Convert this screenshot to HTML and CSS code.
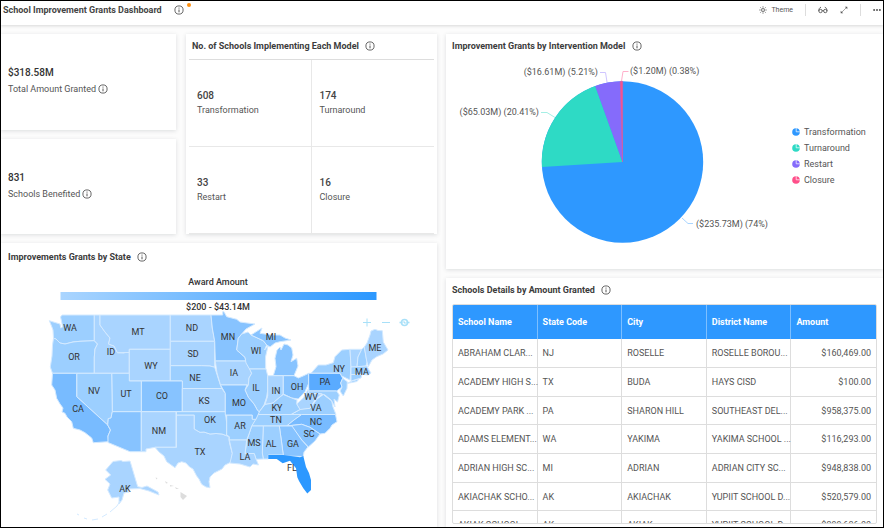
FILE: index.html
```html
<!DOCTYPE html>
<html lang="en">
<head>
<meta charset="utf-8">
<title>School Improvement Grants Dashboard</title>
<meta name="viewport" content="width=device-width, initial-scale=1">
<link rel="stylesheet" href="styles.css">
</head>
<body>
<svg width="0" height="0" class="defs" aria-hidden="true">
  <symbol id="info" viewBox="0 0 10 10"><circle cx="5" cy="5" r="4.1" fill="none" stroke="currentColor" stroke-width=".9"/><path d="M5 4.5v2.8M5 2.6v1" stroke="currentColor" stroke-width="1"/></symbol>
  <symbol id="slice" viewBox="0 0 8 8"><circle cx="4" cy="4" r="3.8" fill="currentColor"/><path d="M4.2 .2V3.8H7.8" fill="none" stroke="#fff" stroke-width=".7"/></symbol>
</svg>
<div class="app">
  <header class="topbar">
    <h1>School Improvement Grants Dashboard</h1>
    <svg class="info"><use href="#info"/></svg><span class="dot"></span>
    <nav class="tools">
      <button class="theme"><svg width="8" height="8" viewBox="0 0 8 8"><circle cx="4" cy="4" r="1.5" fill="none" stroke="currentColor" stroke-width=".8"/><path d="M4 .3v1.3M4 6.4v1.3M.3 4h1.3M6.4 4h1.3M1.4 1.4l.9.9M5.7 5.7l.9.9M1.4 6.6l.9-.9M5.7 2.3l.9-.9" stroke="currentColor" stroke-width=".8"/></svg>Theme</button>
      <span class="rule"></span>
      <button aria-label="View"><svg width="10" height="8" viewBox="0 0 10 8"><g fill="none" stroke="currentColor" stroke-width=".9"><circle cx="2.5" cy="5" r="1.7"/><circle cx="7.3" cy="5" r="1.7"/><path d="M.8 5C.8 3 1.5 1.6 3 1.2M9 5C9 3 8.3 1.6 6.8 1.2M4.2 4.6h1.4"/></g></svg></button>
      <button aria-label="Full screen"><svg width="8" height="8" viewBox="0 0 8 8"><path d="M4.4 3.6 6.6 1.4M3.6 4.4 1.4 6.6" stroke="currentColor" stroke-width=".9" stroke-dasharray="1.6 .5"/><path d="M4.8.8h2.500v2.500zM3.200 7.300H.7V4.800z" fill="currentColor"/></svg></button>
      <span class="rule"></span>
      <button aria-label="More"><svg width="8" height="4" viewBox="0 0 8 4"><g fill="currentColor"><circle cx="1.1" cy="2" r="1"/><circle cx="4" cy="2" r="1"/><circle cx="6.9" cy="2" r="1"/></g></svg></button>
    </nav>
  </header>
  <main class="board">
    <div class="left">
      <div class="summary">
        <div class="kpis">
          <section class="card kpi"><strong>$318.58M</strong><span>Total Amount Granted <svg class="info"><use href="#info"/></svg></span></section>
          <section class="card kpi"><strong>831</strong><span>Schools Benefited <svg class="info"><use href="#info"/></svg></span></section>
        </div>
        <section class="card models">
          <h2>No. of Schools Implementing Each Model <svg class="info"><use href="#info"/></svg></h2>
          <div class="grid">
            <div><strong>608</strong><span>Transformation</span></div>
            <div><strong>174</strong><span>Turnaround</span></div>
            <div><strong>33</strong><span>Restart</span></div>
            <div><strong>16</strong><span>Closure</span></div>
          </div>
        </section>
      </div>
      <section class="card mapcard">
        <h2>Improvements Grants by State <svg class="info"><use href="#info"/></svg></h2>
        <svg class="map" viewBox="1 271 436 253" role="img" aria-label="Grants by state">
          <defs><linearGradient id="scale"><stop stop-color="#aad5ff"/><stop offset="1" stop-color="#2c98ff"/></linearGradient></defs>
          <text class="cap" x="218" y="285">Award Amount</text>
          <rect x="60.500" y="292" width="316" height="8" fill="url(#scale)"/>
          <text class="cap" x="218" y="310">$200 - $43.14M</text>
          <g class="states">
            <path class="b" d="M49.3 320.700L55 322.500 60 324 60.700 328 62.700 327 61.500 321 60.500 317 62 315H94.300V340.700L88 341 80 341.300 73 342 65 344 60 343 56 339 53.500 338.300 53 330 51.500 326z"/>
            <path class="b" d="M53.500 338.300L56 339 60 343 65 344 73 342 80 341.300 94.300 340.700 97.500 344 95 349 94.300 357V373.300H52.500L50.300 367 52 356 52.500 345z"/>
            <path class="a" d="M94.300 315H100V325L105 332 110 338 108.500 344 114 346 117.500 352.700 124 353 129.300 350V373.300H94.300V357L95 349 97.500 344 94.300 340.700z"/>
            <path class="a" d="M100 315H170.300V349.300H129.300V352.500L117.500 352.700 114 346 108.500 344 110 338 105 332 100 325z"/>
            <path class="a" d="M129.300 349.300H170.300V381H129.300z"/>
            <path class="a" d="M170.300 315H211L212.300 328 214.700 341.300H170.300z"/>
            <path class="a" d="M170.300 341.300H214.700V367.300L210 366 201.700 365.700H170.300z"/>
            <path class="b" d="M170.300 365.700H201.700L210 366 214.700 367.300 219.300 381.700 221.700 388.500H182.300V381H170.300z"/>
            <path class="c" d="M141.300 381H182.300V411.700H141.300z"/>
            <path class="a" d="M182.300 388.500H221.700L225.300 393.300V411.700H182.300z"/>
            <path class="b" d="M111.700 373.300H129.300V381H141.300V411.700H112.300z"/>
            <path class="b" d="M76.700 373.300H111.700L112.300 411.700 111 418.500H108.300L107.700 425 76.700 396.700z"/>
            <path class="d" d="M52.500 373.300H76.700V396.700L107.700 425 110.500 430 108 436 108.500 441.700 93.300 442.700 91.700 438 85 432.700 80 430 73.300 428.300 71.700 421.700 67 417 65 413.300 62 412 63 408 60 404 56.700 398.300 55 390 51.700 385z"/>
            <path class="c" d="M112.300 411.700H141.300V451.700H130L108 442.500 108 436 110.500 430 107.700 425 108.300 418.500 111 418z"/>
            <path class="a" d="M141.300 411.700H176V447.300H155L146 449V451.700H141.300z"/>
            <path class="a" d="M176.500 415H194.300V429L200 432.300 204 432 210 434 216 433.500 222 434 229 436.700V440L230 445 232.300 453.300 231.300 462 225 465 222 469 214 473 210 477 209 481.700 210 487.700 206 487 201.700 484.300 199 479 196.700 476 193 469 189.300 466.700 186 463 181.700 461.700 178 463 175 467.700 166.700 461.700 164 456 159 452 155 447.300H176.500z"/>
            <path class="b" d="M176.500 411.700H225.300L226.700 423.300V435.700L222 434 216 433.500 210 434 204 432 200 432.300 194.300 429V415H176.500z"/>
            <path class="c" d="M211 315H222.700V311.700H224L226.700 316.700 236.700 319.300 240 322 245 322.700 255 324 246 329 241.700 334 238.300 338.300 236.700 350 245 357.300 246 361H215.300L214.700 341.300 212.300 328z"/>
            <path class="a" d="M215.300 361H246L248.300 365 251.700 373.300 249 378 248.300 385H220.500L217 373z"/>
            <path class="b" d="M241.700 334L248 332 251 335 263.300 340.700 266.700 345 264.500 350 268 346 265.500 357 265.700 369H249.500L246 363 245 357.300 236.700 350 238.300 338.300z"/>
            <path class="c" d="M251 335L262 328 260 333.300 271.700 335 280 335 285 338 291 340 280 341.700 275 343 270 347 266.700 345 263.300 340.700z"/>
            <path class="c" d="M273.300 375.700L276 366.700 275 358.300 277 350 280 347 281 350 284 344 288 345 291.700 348 293 355 291 361.700 296.700 358.300 298 366 294 375.700z"/>
            <path class="b" d="M249.500 369H266L267.700 375.700V390L266.700 397 264 405 259.300 412 257.300 410 254 404 248.300 397.300 245 390 248.300 385 249 378 251.700 373.300z"/>
            <path class="a" d="M267.700 375.700H283.300V394L280 397 273 403 265 404.500 267.700 396z"/>
            <path class="c" d="M283.300 375.700H294L298.300 378 303 376 308.700 373.300V383.300L305 391.700 298.300 399 291.700 398 283.300 394z"/>
            <path class="b" d="M311 373.300L318.300 365 326 365 333.300 362.700 335 356.700 341.700 350 350 349.300 351 366.700 350 380 341.700 376 340 373.300z"/>
            <path class="e" d="M308.700 373.300H340L342.700 378.300 340.700 383 342 387 336.700 391H308.700z"/>
            <path class="b" d="M346.700 383.500L352 381 359 379 357 381.500z"/>
            <path class="a" d="M350 349.300H361.700L358 357 357 367H351z"/>
            <path class="b" d="M361.700 349.300L364.300 347 367 362 366 366 357 367 358 357z"/>
            <path class="b" d="M351 367L367 366 369 370 371 373 368 375 364 374.500H351z"/>
            <path class="b" d="M351 374.500H362L361 378 351 381z"/>
            <path class="a" d="M364.300 347L367 343 370 335 371 331 375 329.300 378 330.500 382.300 330.700 383.300 342 388 350 383 354 376.700 356.700 372 360 368.300 366.700 366.500 360z"/>
            <path class="b" d="M342.700 378.300L347.300 381.700 347 388.300 343.300 396 340 391 342 387 340.700 383z"/>
            <path class="b" d="M308.700 391H336.700L339.300 395 337.500 402 334 399 335 407 331 400 325 395 320 393.500 315 394 309 397z"/>
            <path class="a" d="M308.700 388V393.500L316 393.500 322 394 315 400 310 408.300 300 410 296.700 404 303.300 398z"/>
            <path class="b" d="M291 414.500L300 409.500 310 408.300 317 399 323.300 394.500 331.700 401 333 407 336 414.500z"/>
            <path class="b" d="M257 414.500L265 404.500 273 403 280 397 283.300 394.500 291.700 398 297 400 296.700 404 300 409.500 291 414.500z"/>
            <path class="b" d="M256.700 414.500H301.700L294 420 286.700 426H251.700z"/>
            <path class="d" d="M301.700 414.500H335.500L337 421.700 332 425 330 428.300 325 433.300 320 434 310 427.300 301.700 424.300 286.700 426 294 420z"/>
            <path class="c" d="M286.700 426L301.700 424.300 310 427.300 320 434 315 441 308.300 447 301.700 440 292.700 428z"/>
            <path class="c" d="M279.300 426H292L301.700 440 308 447 304 452 303.300 456.500 283.300 456 281.700 443z"/>
            <path class="b" d="M263.300 426H279.300L281.700 443 283.300 455H268.300V459H263.300L262.300 453z"/>
            <path class="b" d="M251.700 426H263.300L262.300 453 263.300 459 256 459.300 254.300 454H245L247 440z"/>
            <path class="b" d="M226.700 415H252.300V419H256L251.700 426 249 434 246.700 440H229.300V436.700L226.700 435z"/>
            <path class="c" d="M220.500 385H247L245 390 248.300 397.300 254 404 257.300 410 259.300 412 256 419.300H252.300V415H225.300V393.300z"/>
            <path class="a" d="M229.300 440H246.700L245 453.500H254.300L256 459 258.500 465 253 464 250 467 240 464 230 463 232.300 453.300z"/>
            <path class="f" d="M268.300 455H283.300L300 457.300 303.300 456 306 467 309 473 311 480V490L307.300 493.500 303.300 488.300 299 481 297.300 477.300 296 468.300 290 460.700 282.700 463.300 276.700 459H268.300z"/>
            <path class="a" d="M105.700 470L113 461.500 121 460.500 123 461.500 130 461 137.700 486.700 142 487.500 147 486 158 492 159 495 149 491 140 488.500 128 489 129 492 124 493 122 500 119 504 119 497 111.700 498 107.700 490 110 484 105 479.300 110.700 475z"/>
            <path class="tail" d="M120 501L117 506 110 512M107 514L102 517M98 519L92 520M87 519L84 518M79 515L77 514"/>
            <path class="n" d="M180.500 492L187 496 183 500 180.500 497zM175 487L179 489 176 489zM155.500 477.500L157.500 478 156.500 479.500zM165 481L168 483 166 483.500zM170 485L174 486 170 486.500z"/>
          </g>
          <g class="lab">
            <text x="70" y="331">WA</text><text x="138" y="335">MT</text><text x="192" y="331">ND</text><text x="228" y="340">MN</text><text x="271" y="340">MI</text>
            <text x="74" y="360">OR</text><text x="111" y="355">ID</text><text x="193" y="357">SD</text><text x="256" y="354">WI</text><text x="375" y="351">ME</text>
            <text x="151" y="369">WY</text><text x="195" y="381">NE</text><text x="234" y="376">IA</text><text x="339" y="372">NY</text><text x="362" y="375">MA</text>
            <text x="94" y="394">NV</text><text x="126" y="397">UT</text><text x="162" y="399">CO</text><text x="204" y="404">KS</text><text x="239" y="406">MO</text><text x="256" y="391">IL</text><text x="276" y="394">IN</text><text x="297" y="390">OH</text><text x="325" y="385">PA</text>
            <text x="78" y="412">CA</text><text x="311" y="400">WV</text><text x="316" y="411">VA</text><text x="277" y="411">KY</text><text x="276" y="423">TN</text><text x="316" y="425">NC</text>
            <text x="159" y="434">NM</text><text x="210" y="423">OK</text><text x="240" y="429">AR</text><text x="309" y="437">SC</text><text x="254" y="446">MS</text><text x="271" y="447">AL</text><text x="293" y="447">GA</text>
            <text x="200" y="455">TX</text><text x="245" y="460">LA</text><text x="292" y="471">FL</text><text x="125" y="492">AK</text>
          </g>
          <g class="zoomer"><path d="M363 322.500H371M367 318.500V326.500M382 322.500H390"/><circle cx="404.500" cy="322.500" r="3" stroke-width="1.600"/><path d="M399.500 322.500H402.500M406.500 322.500H409.500M403.500 321.500L405.500 323.500" stroke-width="1.400"/></g>
        </svg>
      </section>
    </div>
    <div class="right">
      <section class="card piecard">
        <h2>Improvement Grants by Intervention Model <svg class="info"><use href="#info"/></svg></h2>
        <div class="pie">
          <svg viewBox="452 56 324 200" role="img" aria-label="Grants by model">
            <circle cx="622.500" cy="162" r="80.700" fill="#2e98ff"/>
            <path d="M622.500 162L541.900 167A80.700 80.700 0 0 1 595.200 86.100z" fill="#2edac5"/>
            <path d="M622.500 162L595.200 86.100A80.700 80.700 0 0 1 620.600 81.300z" fill="#856bfb"/>
            <path d="M622.500 162L620.300 81.300H622.700z" fill="#f9508c" stroke="#e15a9c" stroke-width=".5"/>
            <g class="leads"><path d="M600 72.500H605.500L607 82" stroke="#cfc5ff"/><path d="M628.500 71.500H623L621.500 81" stroke="#ffb0cb"/><path d="M541 112.500H547L555 117.500" stroke="#a5efe5"/><path d="M682 218L688 223.500H693" stroke="#a9d5ff"/></g>
            <text x="598" y="75" text-anchor="end">($16.61M) (5.21%)</text>
            <text x="630" y="74">($1.20M) (0.38%)</text>
            <text x="539" y="115" text-anchor="end">($65.03M) (20.41%)</text>
            <text x="696" y="227">($235.73M) (74%)</text>
          </svg>
          <ul>
            <li><svg class="s1"><use href="#slice"/></svg>Transformation</li>
            <li><svg class="s2"><use href="#slice"/></svg>Turnaround</li>
            <li><svg class="s3"><use href="#slice"/></svg>Restart</li>
            <li><svg class="s4"><use href="#slice"/></svg>Closure</li>
          </ul>
        </div>
      </section>
      <section class="card details">
        <h2>Schools Details by Amount Granted <svg class="info"><use href="#info"/></svg></h2>
        <div class="scroll">
          <table>
            <thead><tr><th>School Name</th><th>State Code</th><th>City</th><th>District Name</th><th>Amount</th></tr></thead>
            <tbody>
              <tr><td>ABRAHAM CLAR...</td><td>NJ</td><td>ROSELLE</td><td>ROSELLE BOROU...</td><td>$160,469.00</td></tr>
              <tr><td>ACADEMY HIGH S...</td><td>TX</td><td>BUDA</td><td>HAYS CISD</td><td>$100.00</td></tr>
              <tr><td>ACADEMY PARK ...</td><td>PA</td><td>SHARON HILL</td><td>SOUTHEAST DEL...</td><td>$958,375.00</td></tr>
              <tr><td>ADAMS ELEMENT...</td><td>WA</td><td>YAKIMA</td><td>YAKIMA SCHOOL ...</td><td>$116,293.00</td></tr>
              <tr><td>ADRIAN HIGH SC...</td><td>MI</td><td>ADRIAN</td><td>ADRIAN CITY SC...</td><td>$948,838.00</td></tr>
              <tr><td>AKIACHAK SCHO...</td><td>AK</td><td>AKIACHAK</td><td>YUPIIT SCHOOL D...</td><td>$520,579.00</td></tr>
              <tr><td>AKIAK SCHOOL</td><td>AK</td><td>AKIAK</td><td>YUPIIT SCHOOL D...</td><td>$399,686.00</td></tr>
            </tbody>
          </table>
        </div>
      </section>
    </div>
  </main>
</div>
</body>
</html>
```
FILE: styles.css
```css
* { box-sizing: border-box; }
body { margin: 0; font: 9px/12px Roboto, sans-serif; color: #555; }
h1, h2, ul { margin: 0; padding: 0; }
.defs { position: absolute; }
.app { display: flex; flex-direction: column; height: 100vh; border: 1px solid #000; background: #fcfcfc; overflow: hidden; }
.info { width: 10px; height: 10px; color: #555; flex: none; vertical-align: -2px; }
.topbar { flex: none; display: flex; align-items: center; height: 24px; padding: 0 2px 6px; background: #fff; box-shadow: 0 1px 3px rgba(0, 0, 0, .15); }
h1 { font-size: 9px; font-weight: 700; color: #444; margin-right: 12px; }
.dot { width: 4px; height: 4px; border-radius: 50%; background: #ff9010; align-self: flex-start; margin: 2px 0 0 3px; }
.tools { margin-left: auto; display: flex; align-items: center; gap: 12px; }
.tools button { display: flex; align-items: center; gap: 4px; border: 0; padding: 0; background: none; font: 7px/12px Roboto, sans-serif; color: #555; }
.rule { width: 1px; height: 12px; background: #ddd; }

.board { flex: 1; min-height: 0; display: grid; grid-template-columns: 436fr 437fr; gap: 9px; padding-top: 9px; }
.left, .right { min-width: 0; min-height: 0; display: flex; flex-direction: column; gap: 9px; }
.card { background: #fff; box-shadow: 0 1px 4px rgba(60, 70, 80, .17); }
h2 { font-size: 9px; line-height: 12px; font-weight: 700; color: #3c3c3c; }
h2 .info { margin-left: 4px; }

.summary { flex: none; display: grid; grid-template-columns: 175fr 251fr; gap: 10px; height: 200px; }
.kpis { display: grid; grid-template-rows: 1fr 1fr; gap: 9px; }
.kpi { display: flex; flex-direction: column; justify-content: center; gap: 3px; padding: 0 0 2px 7px; }
.kpi strong { font-size: 10px; line-height: 14px; font-weight: 500; color: #333; }
.models { display: flex; flex-direction: column; padding: 6px 3px 0; }
.models h2 { padding: 0 3px 7px; border-bottom: 1px solid #ddd; }
.grid { flex: 1; display: grid; grid-template: 1fr 1fr / 1fr 1fr; }
.grid div { display: flex; flex-direction: column; justify-content: center; gap: 2px; padding-left: 8px; border-bottom: 1px solid #e8e8e8; }
.grid div:nth-child(odd) { border-right: 1px solid #e8e8e8; }
.grid strong { font-size: 10px; font-weight: 500; color: #444; }

.mapcard { flex: 1; min-height: 0; overflow: hidden; padding-top: 8px; }
.mapcard h2 { padding: 0 7px 8px; }
.map { display: block; width: 100%; }
.map text { text-anchor: middle; font-size: 9px; fill: #333; }
.map .cap { font-weight: 500; }
.states path { stroke: #d4eaff; stroke-width: 1; stroke-linejoin: round; }
.states .a { fill: #a9d4ff; }
.states .b { fill: #9ccfff; }
.states .c { fill: #87c3ff; }
.states .d { fill: #78bbff; }
.states .e { fill: #5aabff; }
.states .f { fill: #2c98ff; stroke: none; }
.states .n { fill: #ddd; stroke: none; }
.states .tail { fill: none; }
.zoomer { fill: none; stroke: #a8e0f8; stroke-width: 1; }

.piecard { flex: none; padding: 6px 0 13px 6px; }
.piecard h2 { padding-bottom: 4px; }
.pie { display: grid; grid-template-columns: 324fr 107fr; align-items: center; }
.pie > svg { display: block; width: 100%; }
.pie text { font-size: 9px; fill: #555; }
.leads { fill: none; stroke-width: 1; }
.pie ul { list-style: none; padding-left: 16px; }
.pie li { display: flex; align-items: center; gap: 4px; height: 16px; }
.pie li svg { width: 8px; height: 8px; }
.s1 { color: #2e98ff; }
.s2 { color: #2edac5; }
.s3 { color: #856bfb; }
.s4 { color: #ff4f8a; }

.details { flex: 1; min-height: 0; display: flex; flex-direction: column; padding: 6px 6px 3px; }
.details h2 { padding-bottom: 8px; }
.scroll { flex: 1; min-height: 0; overflow: hidden; border: 1px solid #ddd; border-radius: 2px; }
table { width: 100%; table-layout: fixed; border-collapse: separate; border-spacing: 0; }
th, td { padding: 0 5px; text-align: left; white-space: nowrap; border-right: 1px solid #ddd; }
th { height: 34px; background: #2e98ff; color: #fff; font-weight: 700; border-color: #7dbfff; }
td { height: 29px; border-bottom: 1px solid #ddd; }
tr:nth-child(3n) td { height: 28px; }
th:last-child, td:last-child { border-right: 0; }
td:last-child { text-align: right; }
```
